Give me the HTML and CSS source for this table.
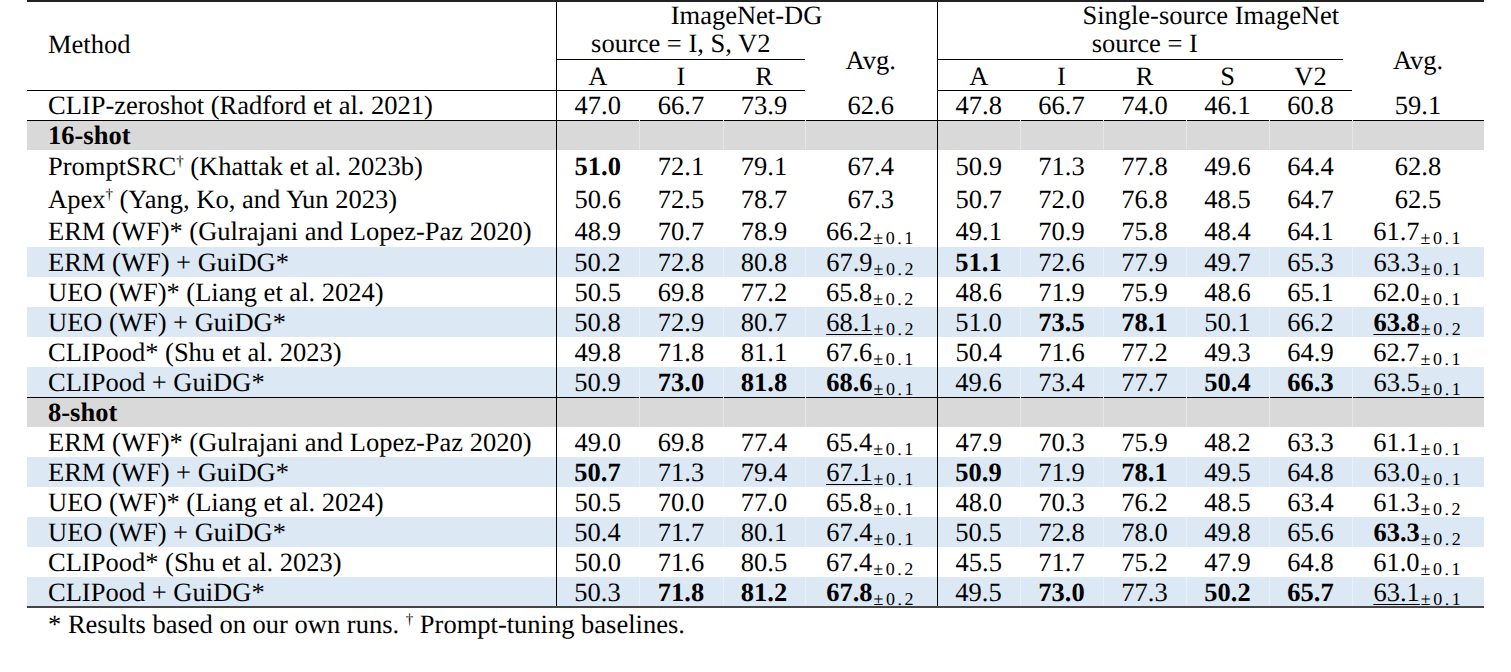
FILE: index.html
```html
<!DOCTYPE html>
<html>
<head>
<meta charset="utf-8">
<link rel="stylesheet" href="styles.css">
</head>
<body>
<div class="page">
<table class="res">
<colgroup>
<col class="c-method"><col class="c-n1"><col class="c-n2"><col class="c-n3"><col class="c-avg">
<col class="c-n"><col class="c-n"><col class="c-n"><col class="c-n"><col class="c-n"><col class="c-avg">
</colgroup>
<thead>
<tr class="h1">
<th rowspan="3" class="m mh">Method</th>
<th colspan="4" class="sep">ImageNet-DG</th>
<th colspan="6" class="sep">Single-source ImageNet</th>
</tr>
<tr class="h2">
<th colspan="3" class="sep rule">source = I, S, V2</th>
<th rowspan="2" class="avgh">Avg.</th>
<th colspan="5" class="sep rule trim">source = I</th>
<th rowspan="2" class="avgh">Avg.</th>
</tr>
<tr class="h3">
<th class="sep">A</th><th>I</th><th>R</th>
<th class="sep">A</th><th>I</th><th>R</th><th>S</th><th>V2</th>
</tr>
</thead>
<tbody>
<tr class="r zs">
<td class="m">CLIP-zeroshot (Radford et al. 2021)</td>
<td class="sep">47.0</td><td>66.7</td><td>73.9</td><td>62.6</td>
<td class="sep">47.8</td><td>66.7</td><td>74.0</td><td>46.1</td><td>60.8</td><td>59.1</td>
</tr>
<tr class="grp">
<td class="m"><b>16-shot</b></td>
<td class="sep"></td><td></td><td></td><td></td>
<td class="sep"></td><td></td><td></td><td></td><td></td><td></td>
</tr>
<tr class="r t1">
<td class="m">PromptSRC<sup class="dg">†</sup> (Khattak et al. 2023b)</td>
<td class="sep"><b>51.0</b></td><td>72.1</td><td>79.1</td><td>67.4</td>
<td class="sep">50.9</td><td>71.3</td><td>77.8</td><td>49.6</td><td>64.4</td><td>62.8</td>
</tr>
<tr class="r t2">
<td class="m">Apex<sup class="dg">†</sup> (Yang, Ko, and Yun 2023)</td>
<td class="sep">50.6</td><td>72.5</td><td>78.7</td><td>67.3</td>
<td class="sep">50.7</td><td>72.0</td><td>76.8</td><td>48.5</td><td>64.7</td><td>62.5</td>
</tr>
<tr class="r t3">
<td class="m">ERM (WF)* (Gulrajani and Lopez-Paz 2020)</td>
<td class="sep">48.9</td><td>70.7</td><td>78.9</td><td>66.2<span class="pm">±0.1</span></td>
<td class="sep">49.1</td><td>70.9</td><td>75.8</td><td>48.4</td><td>64.1</td><td>61.7<span class="pm">±0.1</span></td>
</tr>
<tr class="r ours">
<td class="m">ERM (WF) + GuiDG*</td>
<td class="sep">50.2</td><td>72.8</td><td>80.8</td><td>67.9<span class="pm">±0.2</span></td>
<td class="sep"><b>51.1</b></td><td>72.6</td><td>77.9</td><td>49.7</td><td>65.3</td><td>63.3<span class="pm">±0.1</span></td>
</tr>
<tr class="r">
<td class="m">UEO (WF)* (Liang et al. 2024)</td>
<td class="sep">50.5</td><td>69.8</td><td>77.2</td><td>65.8<span class="pm">±0.2</span></td>
<td class="sep">48.6</td><td>71.9</td><td>75.9</td><td>48.6</td><td>65.1</td><td>62.0<span class="pm">±0.1</span></td>
</tr>
<tr class="r ours">
<td class="m">UEO (WF) + GuiDG*</td>
<td class="sep">50.8</td><td>72.9</td><td>80.7</td><td><u>68.1</u><span class="pm">±0.2</span></td>
<td class="sep">51.0</td><td><b>73.5</b></td><td><b>78.1</b></td><td>50.1</td><td>66.2</td><td><b><u>63.8</u></b><span class="pm">±0.2</span></td>
</tr>
<tr class="r">
<td class="m">CLIPood* (Shu et al. 2023)</td>
<td class="sep">49.8</td><td>71.8</td><td>81.1</td><td>67.6<span class="pm">±0.1</span></td>
<td class="sep">50.4</td><td>71.6</td><td>77.2</td><td>49.3</td><td>64.9</td><td>62.7<span class="pm">±0.1</span></td>
</tr>
<tr class="r ours">
<td class="m">CLIPood + GuiDG*</td>
<td class="sep">50.9</td><td><b>73.0</b></td><td><b>81.8</b></td><td><b>68.6</b><span class="pm">±0.1</span></td>
<td class="sep">49.6</td><td>73.4</td><td>77.7</td><td><b>50.4</b></td><td><b>66.3</b></td><td>63.5<span class="pm">±0.1</span></td>
</tr>
<tr class="grp">
<td class="m"><b>8-shot</b></td>
<td class="sep"></td><td></td><td></td><td></td>
<td class="sep"></td><td></td><td></td><td></td><td></td><td></td>
</tr>
<tr class="r">
<td class="m">ERM (WF)* (Gulrajani and Lopez-Paz 2020)</td>
<td class="sep">49.0</td><td>69.8</td><td>77.4</td><td>65.4<span class="pm">±0.1</span></td>
<td class="sep">47.9</td><td>70.3</td><td>75.9</td><td>48.2</td><td>63.3</td><td>61.1<span class="pm">±0.1</span></td>
</tr>
<tr class="r ours">
<td class="m">ERM (WF) + GuiDG*</td>
<td class="sep"><b>50.7</b></td><td>71.3</td><td>79.4</td><td><u>67.1</u><span class="pm">±0.1</span></td>
<td class="sep"><b>50.9</b></td><td>71.9</td><td><b>78.1</b></td><td>49.5</td><td>64.8</td><td>63.0<span class="pm">±0.1</span></td>
</tr>
<tr class="r">
<td class="m">UEO (WF)* (Liang et al. 2024)</td>
<td class="sep">50.5</td><td>70.0</td><td>77.0</td><td>65.8<span class="pm">±0.1</span></td>
<td class="sep">48.0</td><td>70.3</td><td>76.2</td><td>48.5</td><td>63.4</td><td>61.3<span class="pm">±0.2</span></td>
</tr>
<tr class="r ours">
<td class="m">UEO (WF) + GuiDG*</td>
<td class="sep">50.4</td><td>71.7</td><td>80.1</td><td>67.4<span class="pm">±0.1</span></td>
<td class="sep">50.5</td><td>72.8</td><td>78.0</td><td>49.8</td><td>65.6</td><td><b>63.3</b><span class="pm">±0.2</span></td>
</tr>
<tr class="r">
<td class="m">CLIPood* (Shu et al. 2023)</td>
<td class="sep">50.0</td><td>71.6</td><td>80.5</td><td>67.4<span class="pm">±0.2</span></td>
<td class="sep">45.5</td><td>71.7</td><td>75.2</td><td>47.9</td><td>64.8</td><td>61.0<span class="pm">±0.1</span></td>
</tr>
<tr class="r ours last">
<td class="m">CLIPood + GuiDG*</td>
<td class="sep">50.3</td><td><b>71.8</b></td><td><b>81.2</b></td><td><b>67.8</b><span class="pm">±0.2</span></td>
<td class="sep">49.5</td><td><b>73.0</b></td><td>77.3</td><td><b>50.2</b></td><td><b>65.7</b></td><td><u>63.1</u><span class="pm">±0.1</span></td>
</tr>
</tbody>
</table>
<p class="note">* Results based on our own runs. <sup class="dg">†</sup> Prompt-tuning baselines.</p>
</div>
</body>
</html>
```

FILE: styles.css
```css
html, body {
  margin: 0;
  padding: 0;
  background: #ffffff;
}

body {
  font-family: "Liberation Serif", serif;
  color: #000000;
  text-rendering: geometricPrecision;
}

.page {
  padding-left: 27px;
}

.res {
  border-collapse: collapse;
  table-layout: fixed;
  width: 1457px;
  font-family: "Liberation Serif", serif;
  font-size: 26.5px;
  border-top: 2px solid #222222;
  border-bottom: 2px solid #444444;
}

.c-method { width: 529px; }
.c-n1 { width: 83px; }
.c-n2 { width: 84px; }
.c-n3 { width: 82px; }
.c-n { width: 83px; }
.c-avg { width: 132px; }

.res th,
.res td {
  padding: 0;
  font-family: "Liberation Serif", serif;
  font-weight: normal;
  text-align: center;
  vertical-align: middle;
  white-space: nowrap;
  line-height: 20px;
}

.res b {
  font-weight: bold;
}

.res .m {
  text-align: left;
  padding-left: 21px;
}

.res .mh {
  padding-bottom: 4px;
}

.res .sep {
  border-left: 1px solid #000000;
}

.h1 { height: 29px; }
.h2 { height: 30px; }
.h3 { height: 30px; }

.h1 th {
  padding-bottom: 2px;
}

.h2 .rule {
  vertical-align: top;
  padding-top: 3px;
  background: linear-gradient(#000000, #000000) left bottom / 100% 1px no-repeat;
}

.h2 .trim {
  background-size: calc(100% - 9px) 1px;
}

.h3 th {
  padding-top: 2px;
  border-bottom: 1px solid #000000;
}

.avgh {
  padding-bottom: 4px;
}

.res .m[rowspan] {
  border-bottom: 1px solid #000000;
}

.zs {
  height: 30px;
  border-bottom: 1px solid #000000;
}

.r { height: 30px; }
.t1 { height: 32px; }
.t2 { height: 33px; }
.t3 { height: 32px; }

.grp {
  height: 30px;
  background: #d9d9d9;
}

.ours {
  background: #dce8f4;
}

.grp td + td:not(.sep),
.ours td + td:not(.sep) {
  border-left: 1px solid rgba(255, 255, 255, 0.35);
}

.res tr.grp:nth-child(11) {
  border-top: 1px solid #000000;
}

.pm {
  font-size: 18px;
  letter-spacing: 2.5px;
  vertical-align: -4px;
  margin-left: 1px;
  line-height: 0;
}

.res u {
  text-decoration: underline;
  text-decoration-thickness: 1px;
  text-underline-offset: 3px;
}

.dg {
  font-size: 15px;
  vertical-align: 9px;
  line-height: 0;
}

.note {
  margin: 1px 0 0 21px;
  font-family: "Liberation Serif", serif;
  font-size: 26.5px;
  line-height: 30px;
}
```
